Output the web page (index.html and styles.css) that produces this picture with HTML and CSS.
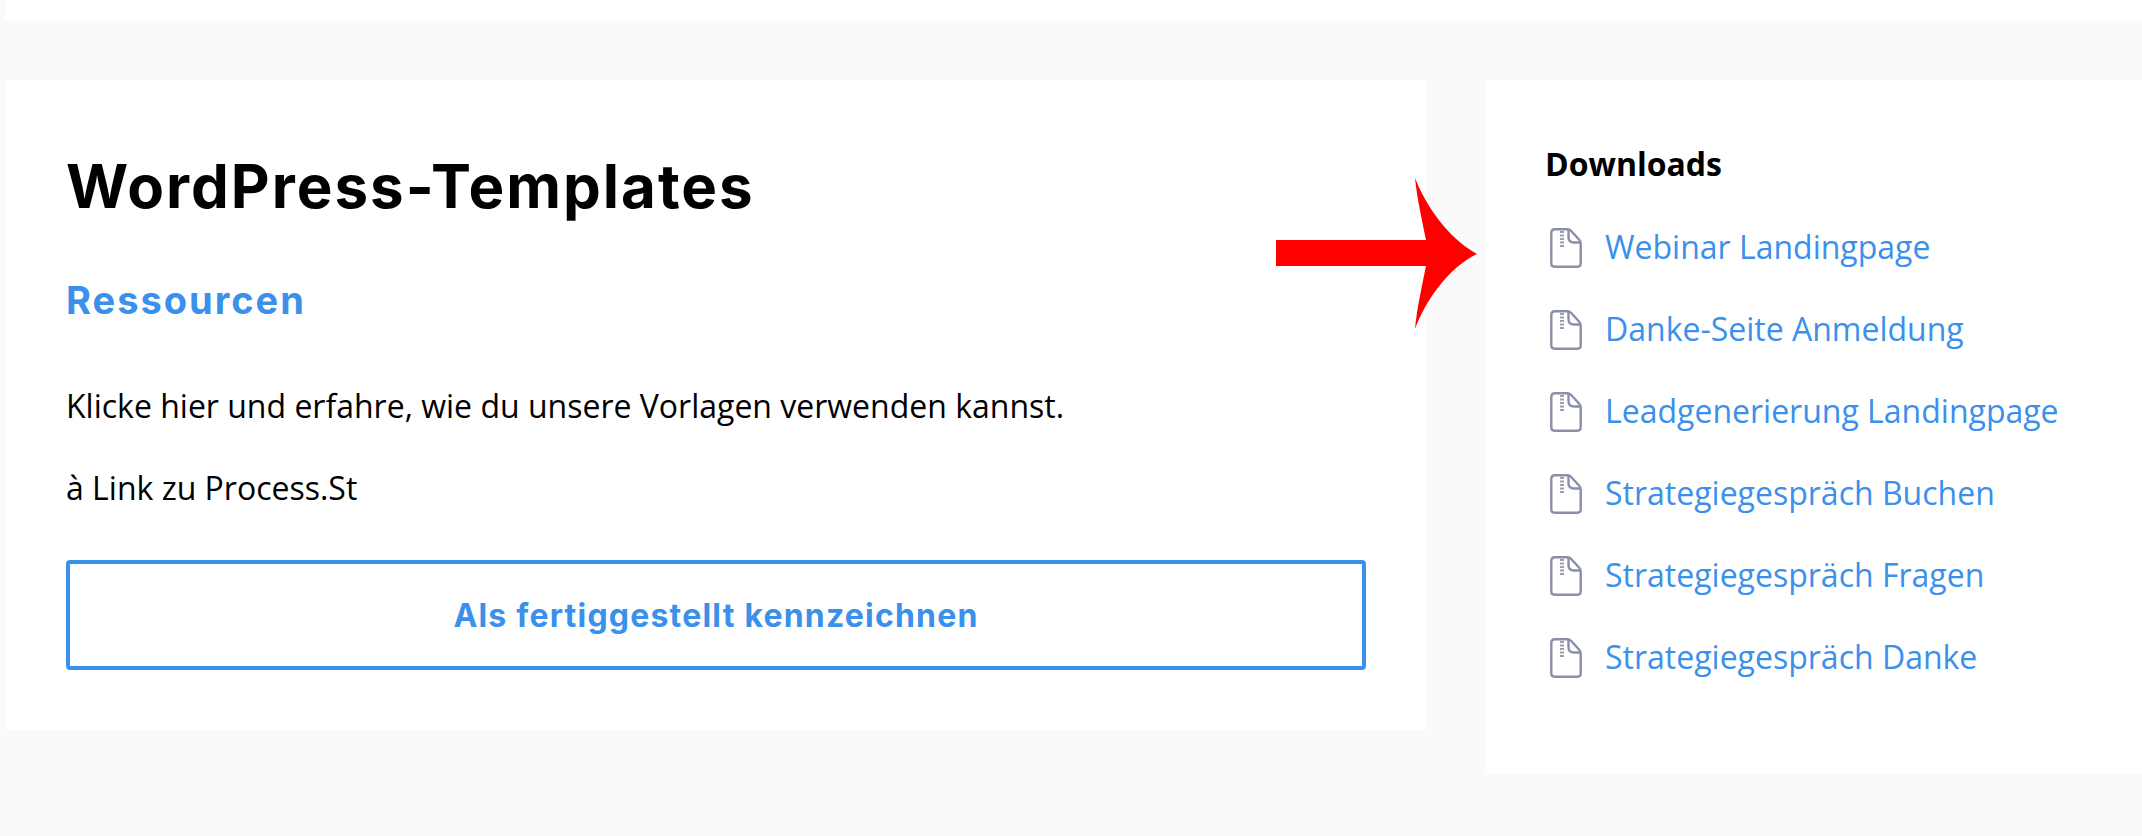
FILE: index.html
```html
<!DOCTYPE html>
<html lang="de">
<head>
  <meta charset="UTF-8">
  <meta name="viewport" content="width=device-width, initial-scale=1.0">
  <title>WordPress-Templates</title>
  <link rel="stylesheet" href="styles.css">
</head>
<body>
  <div class="topbar"></div>

  <div class="layout">
    <main class="lesson">
      <h1>WordPress-Templates</h1>
      <h2>Ressourcen</h2>
      <p class="intro">Klicke hier und erfahre, wie du unsere Vorlagen verwenden kannst.</p>
      <p>à Link zu Process.St</p>
      <button class="btn-done">Als fertiggestellt kennzeichnen</button>
    </main>

    <aside class="downloads">
      <h3>Downloads</h3>
      <ul>
        <li><svg class="file-icon" viewBox="0 0 32 40"><use href="#zipfile"/></svg><a href="#">Webinar Landingpage</a></li>
        <li><svg class="file-icon" viewBox="0 0 32 40"><use href="#zipfile"/></svg><a href="#">Danke-Seite Anmeldung</a></li>
        <li><svg class="file-icon" viewBox="0 0 32 40"><use href="#zipfile"/></svg><a href="#">Leadgenerierung Landingpage</a></li>
        <li><svg class="file-icon" viewBox="0 0 32 40"><use href="#zipfile"/></svg><a href="#">Strategiegespräch Buchen</a></li>
        <li><svg class="file-icon" viewBox="0 0 32 40"><use href="#zipfile"/></svg><a href="#">Strategiegespräch Fragen</a></li>
        <li><svg class="file-icon" viewBox="0 0 32 40"><use href="#zipfile"/></svg><a href="#">Strategiegespräch Danke</a></li>
      </ul>
    </aside>
  </div>

  <!-- red arrow pasted over the screenshot -->
  <svg class="arrow" viewBox="0 0 201 151">
    <path d="M0 62H150C146 42 141 20 139 0C150 28 172 60 201 76C172 90 150 122 139 151C141 130 146 108 150 88H0Z" fill="#fe0000"/>
  </svg>

  <svg class="defs" width="0" height="0">
    <symbol id="zipfile" viewBox="0 0 32 40">
      <path d="M5 1.300H17.500Q19.500 1.300 21 2.800L29 11.500Q30.700 13.300 30.700 15.500V35.500Q30.700 38.700 27.500 38.700H4.500Q1.300 38.700 1.300 35.500V5Q1.300 1.300 5 1.300Z" fill="none" stroke="#8b90a8" stroke-width="2.400"/>
      <path d="M18.500 1.500V9Q18.500 14.500 24 14.500H30.500" fill="none" stroke="#8b90a8" stroke-width="2.400"/>
      <path d="M12 3V19" fill="none" stroke="#9a9eb3" stroke-width="4" stroke-dasharray="2 1.500"/>
    </symbol>
  </svg>
</body>
</html>
```

FILE: styles.css
```css
html, body {
  height: 100%;
}
body {
  margin: 0;
  background-color: #fafafa;
  font-family: "Open Sans", sans-serif;
  color: #000;
  overflow: hidden;
}
.topbar {
  height: 20px;
  margin-left: 5px;
  background-color: #fff;
}
.layout {
  display: flex;
  align-items: flex-start;
  gap: 59px;
  margin-top: 60px;
  padding-left: 5px;
}
.lesson {
  width: 1421px;
  height: 650px;
  box-sizing: border-box;
  padding: 66px 60px 0 61px;
  background-color: #fff;
}
h1 {
  margin: 0;
  font-family: Inter, sans-serif;
  font-size: 60px;
  font-weight: 700;
  line-height: 80px;
  letter-spacing: 2px;
}
h2 {
  margin: 50px 0 0;
  font-family: Inter, sans-serif;
  font-size: 38px;
  font-weight: 700;
  line-height: 48px;
  letter-spacing: 2px;
  color: #3a90ea;
}
p {
  margin: 30px 0 0;
  font-size: 32px;
  line-height: 52px;
}
p.intro {
  margin-top: 56px;
}
.btn-done {
  display: block;
  width: 1300px;
  height: 110px;
  margin-top: 46px;
  background: #fff;
  border: 4px solid #3a90ea;
  border-radius: 4px;
  color: #3a90ea;
  font-family: Inter, sans-serif;
  font-size: 32px;
  font-weight: 700;
  letter-spacing: 1.200px;
}
.downloads {
  flex: 1;
  height: 694px;
  box-sizing: border-box;
  padding: 60px 0 0 60px;
  background-color: #fff;
}
h3 {
  margin: 0;
  font-size: 32px;
  font-weight: 700;
  line-height: 48px;
}
ul {
  margin: 17px 0 0;
  padding: 0;
  list-style: none;
}
li {
  display: flex;
  align-items: center;
  gap: 23px;
  height: 82px;
  padding-left: 5px;
}
.file-icon {
  width: 32px;
  height: 40px;
  margin-top: 4px;
  flex: none;
}
li a {
  color: #3a90ea;
  font-size: 32px;
  text-decoration: none;
}
.arrow {
  position: absolute;
  left: 1276px;
  top: 178px;
  width: 201px;
  height: 151px;
}
.defs {
  position: absolute;
}
```
